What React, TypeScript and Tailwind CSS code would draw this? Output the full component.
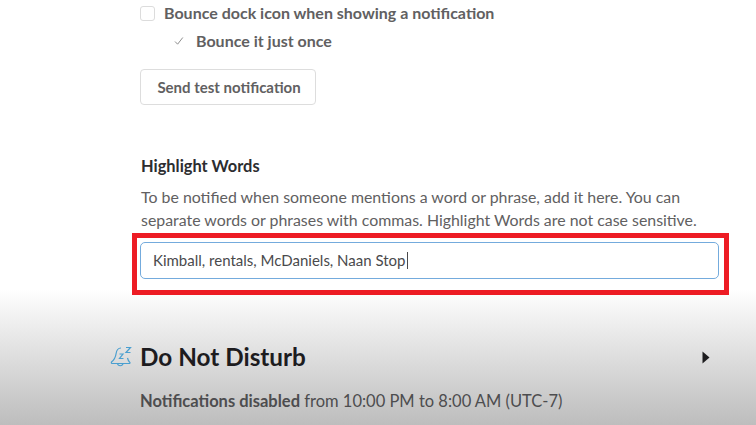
export default function App() {
  return (
    <div className="flex h-[425px] w-[756px] flex-col overflow-hidden bg-white font-['Lato',sans-serif] text-[#616061]">
      <div className="h-[290px] shrink-0 pl-[140px] pt-[3px]">
        <label className="flex h-[20px] items-center text-[16px] font-bold leading-[20px]">
          <span className="mr-[9px] h-[15px] w-[15px] rounded-[3px] border border-[#dcdcdc] bg-white" />
          Bounce dock icon when showing a notification
        </label>
        <label className="mt-[8px] ml-[34px] flex h-[20px] items-center text-[16px] font-bold leading-[20px]">
          <svg width="10" height="10" viewBox="0 0 10 10" fill="none" className="mr-[12px]">
            <path d="M1 5.5 L3.6 8.2 L8.8 1.5" stroke="#8f8f8f" strokeWidth="1" />
          </svg>
          Bounce it just once
        </label>
        <button className="mt-[18px] block h-[36px] w-[176px] rounded-[4px] border border-[#dddddd] bg-white pl-[2px] text-center text-[15px] font-bold text-[#616061]">
          Send test notification
        </button>
        <h3 className="mt-[51px] ml-[1px] text-[16.4px] font-bold leading-[20px] text-[#2c2d30]">Highlight Words</h3>
        <p className="mt-[9px] ml-[1px] w-[590px] text-[15.9px] leading-[23px] text-[#616061]">
          To be notified when someone mentions a word or phrase, add it here. You can
          <br />
          separate words or phrases with commas. Highlight Words are not case sensitive.
        </p>
        <div className="relative z-10 mt-[2px] ml-[-8px] h-[62px] w-[597px] border-[5px] border-[#ed1c24] px-[3px] pt-[4px]">
          <div className="flex h-[37px] w-[579px] items-center rounded-[5px] border border-[#74abdd] bg-white pl-[12px] text-[15px] text-[#4a4a4c]">
            Kimball, rentals, McDaniels, Naan Stop
            <span className="ml-[1px] h-[17px] w-px bg-[#4a4a4c]" />
          </div>
        </div>
      </div>
      <div className="flex-1 bg-gradient-to-b from-white to-[#bdbdbd] pl-[110px] pr-[46px] pt-[53px]">
        <div className="flex items-center">
          <svg width="22" height="22" viewBox="0 0 22 22" fill="none" stroke="#4a9fd0" strokeWidth="1.2" className="mr-[8px]">
            <path d="M11 2 C8 2 6.5 4 6 8 C5.5 12 4 14 1.5 16 C1 17 1.5 17.5 2.5 17.5 L19 17.5 C20 17.5 20.5 16.5 19.5 16 C18.5 15 18 14 17.5 12" />
            <path d="M7.5 17.5 C8 20.5 12.5 20.5 13 17.5" />
            <path d="M9.5 8 L13 8 L9.5 12.5 L13.5 12.5" />
            <path d="M16 1.5 L20.5 1.5 L16 6.5 L20.5 6.5" />
          </svg>
          <h2 className="text-[24.3px] font-bold leading-[28px] text-[#1d1c1f]">Do Not Disturb</h2>
          <svg width="8" height="13" viewBox="0 0 8 13" className="ml-auto">
            <path d="M0.5 0.5 L7.5 6.5 L0.5 12.5 Z" fill="#1d1c1f" />
          </svg>
        </div>
        <p className="mt-[20px] pl-[30px] text-[16.5px] leading-[20px] text-[#4d4d4f]">
          <span className="font-bold">Notifications disabled</span> from 10:00 PM to 8:00 AM (UTC-7)
        </p>
      </div>
    </div>
  );
}
